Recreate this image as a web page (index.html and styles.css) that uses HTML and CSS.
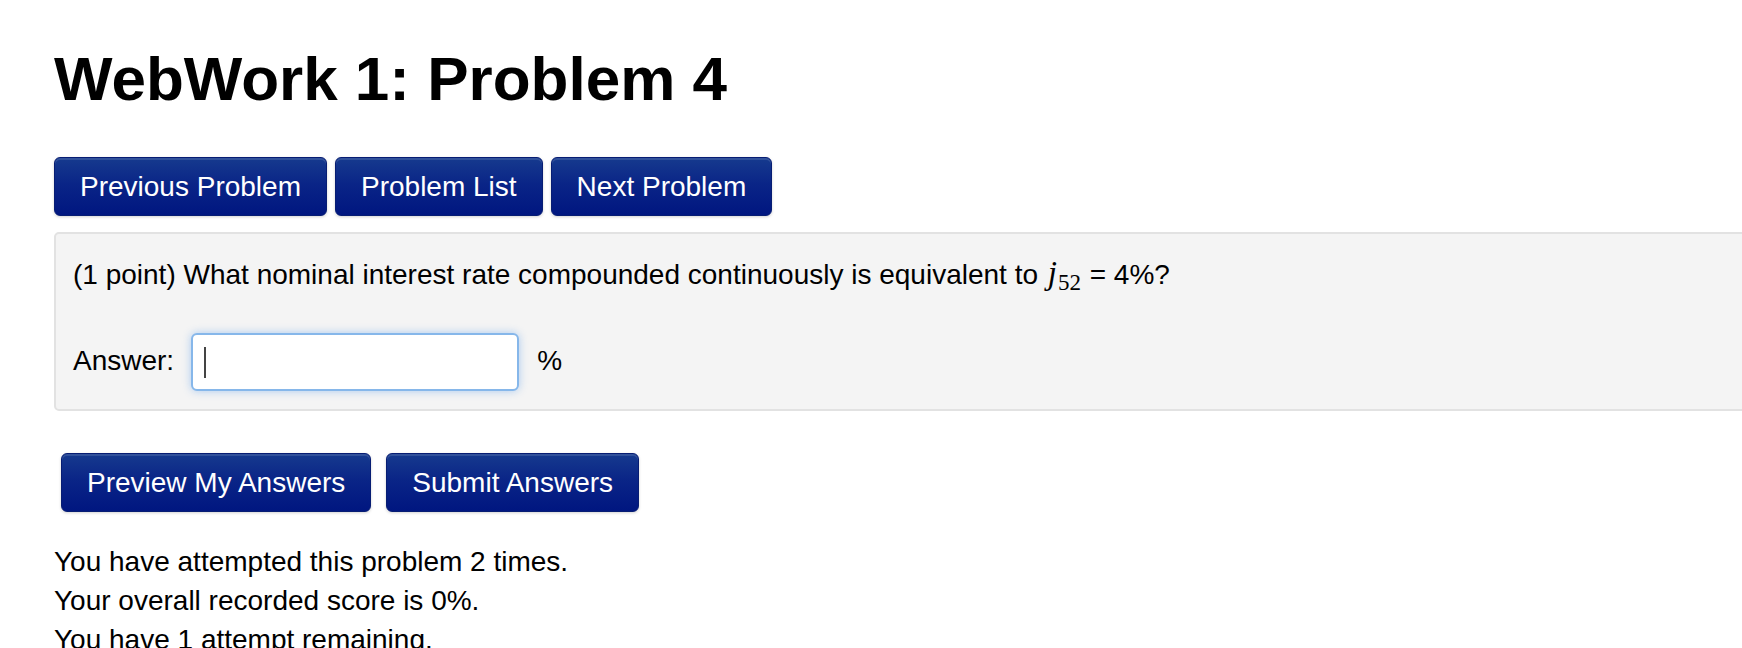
FILE: index.html
```html
<!DOCTYPE html>
<html lang="en">
<head>
<meta charset="utf-8">
<title>WebWork 1: Problem 4</title>
<link rel="stylesheet" href="styles.css">
</head>
<body>
<main class="page">
  <h1 class="title">WebWork 1: Problem 4</h1>
  <nav class="nav-row">
    <a class="btn" href="#">Previous Problem</a>
    <a class="btn" href="#">Problem List</a>
    <a class="btn" href="#">Next Problem</a>
  </nav>
  <section class="problem">
    <p class="question">(1 point) What nominal interest rate compounded continuously is equivalent to <span class="math"><span class="mi">j</span><span class="msub">52</span></span> = 4%?</p>
    <div class="answer-row">
      <label class="answer-label">Answer:</label>
      <div class="answer-box" role="textbox"><span class="caret"></span></div>
      <span class="unit">%</span>
    </div>
  </section>
  <div class="submit-row">
    <button class="btn" type="button">Preview My Answers</button>
    <button class="btn" type="button">Submit Answers</button>
  </div>
  <div class="status">
    <p class="status-line">You have attempted this problem 2 times.</p>
    <p class="status-line">Your overall recorded score is 0%.</p>
    <p class="status-line">You have 1 attempt remaining.</p>
  </div>
</main>
</body>
</html>
```

FILE: styles.css
```css
html, body {
  margin: 0;
  padding: 0;
  background: #ffffff;
  overflow: hidden;
}

body {
  font-family: "Liberation Sans", Arial, Helvetica, sans-serif;
  font-size: 28px;
  color: #000000;
}

.page {
  padding-left: 54px;
}

.title {
  margin: 45px 0 0 0;
  font-size: 62px;
  line-height: 68px;
  font-weight: bold;
  color: #000;
}

.nav-row {
  display: flex;
  gap: 8px;
  margin-top: 44px;
}

.btn {
  display: inline-flex;
  align-items: center;
  justify-content: center;
  box-sizing: border-box;
  height: 59px;
  padding: 0 25px;
  font-family: "Liberation Sans", Arial, Helvetica, sans-serif;
  font-size: 28px;
  color: #ffffff;
  text-decoration: none;
  background: linear-gradient(to bottom, #163a8e 0%, #0a2587 45%, #001680 100%);
  border: 1px solid #071d73;
  border-radius: 6px;
  box-shadow: inset 0 2px 0 rgba(255, 255, 255, 0.12), 0 1px 3px rgba(0, 0, 0, 0.18);
  cursor: pointer;
}

.problem {
  margin-top: 16px;
  margin-right: -40px;
  background: #f4f4f4;
  border: 2px solid #e2e2e2;
  border-radius: 5px;
  padding: 19px 17px 18px 17px;
}

.question {
  margin: 0;
  line-height: 40px;
}

.math {
  font-family: "Liberation Serif", "Times New Roman", serif;
  margin: 0 1px 0 2px;
}

.mi {
  font-style: italic;
  font-size: 33px;
}

.msub {
  font-size: 23px;
  position: relative;
  top: 6px;
  margin-left: 1px;
}

.answer-row {
  display: flex;
  align-items: center;
  margin-top: 36px;
}

.answer-label {
  line-height: 40px;
  position: relative;
  top: -1px;
}

.answer-box {
  box-sizing: border-box;
  width: 328px;
  height: 58px;
  margin-left: 17px;
  background: #ffffff;
  border: 2px solid #86b7ea;
  border-radius: 6px;
  box-shadow: 0 0 8px rgba(82, 150, 236, 0.45);
  display: flex;
  align-items: center;
  padding-left: 11px;
}

.caret {
  display: block;
  width: 2px;
  height: 31px;
  background: #444;
}

.unit {
  margin-left: 18px;
  line-height: 40px;
  position: relative;
  top: -1px;
}

.submit-row {
  display: flex;
  gap: 15px;
  margin-top: 42px;
  margin-left: 7px;
}

.submit-row .btn {
  height: 59px;
}

.status {
  margin-top: 30px;
}

.status-line {
  margin: 0;
  line-height: 39px;
}
```
